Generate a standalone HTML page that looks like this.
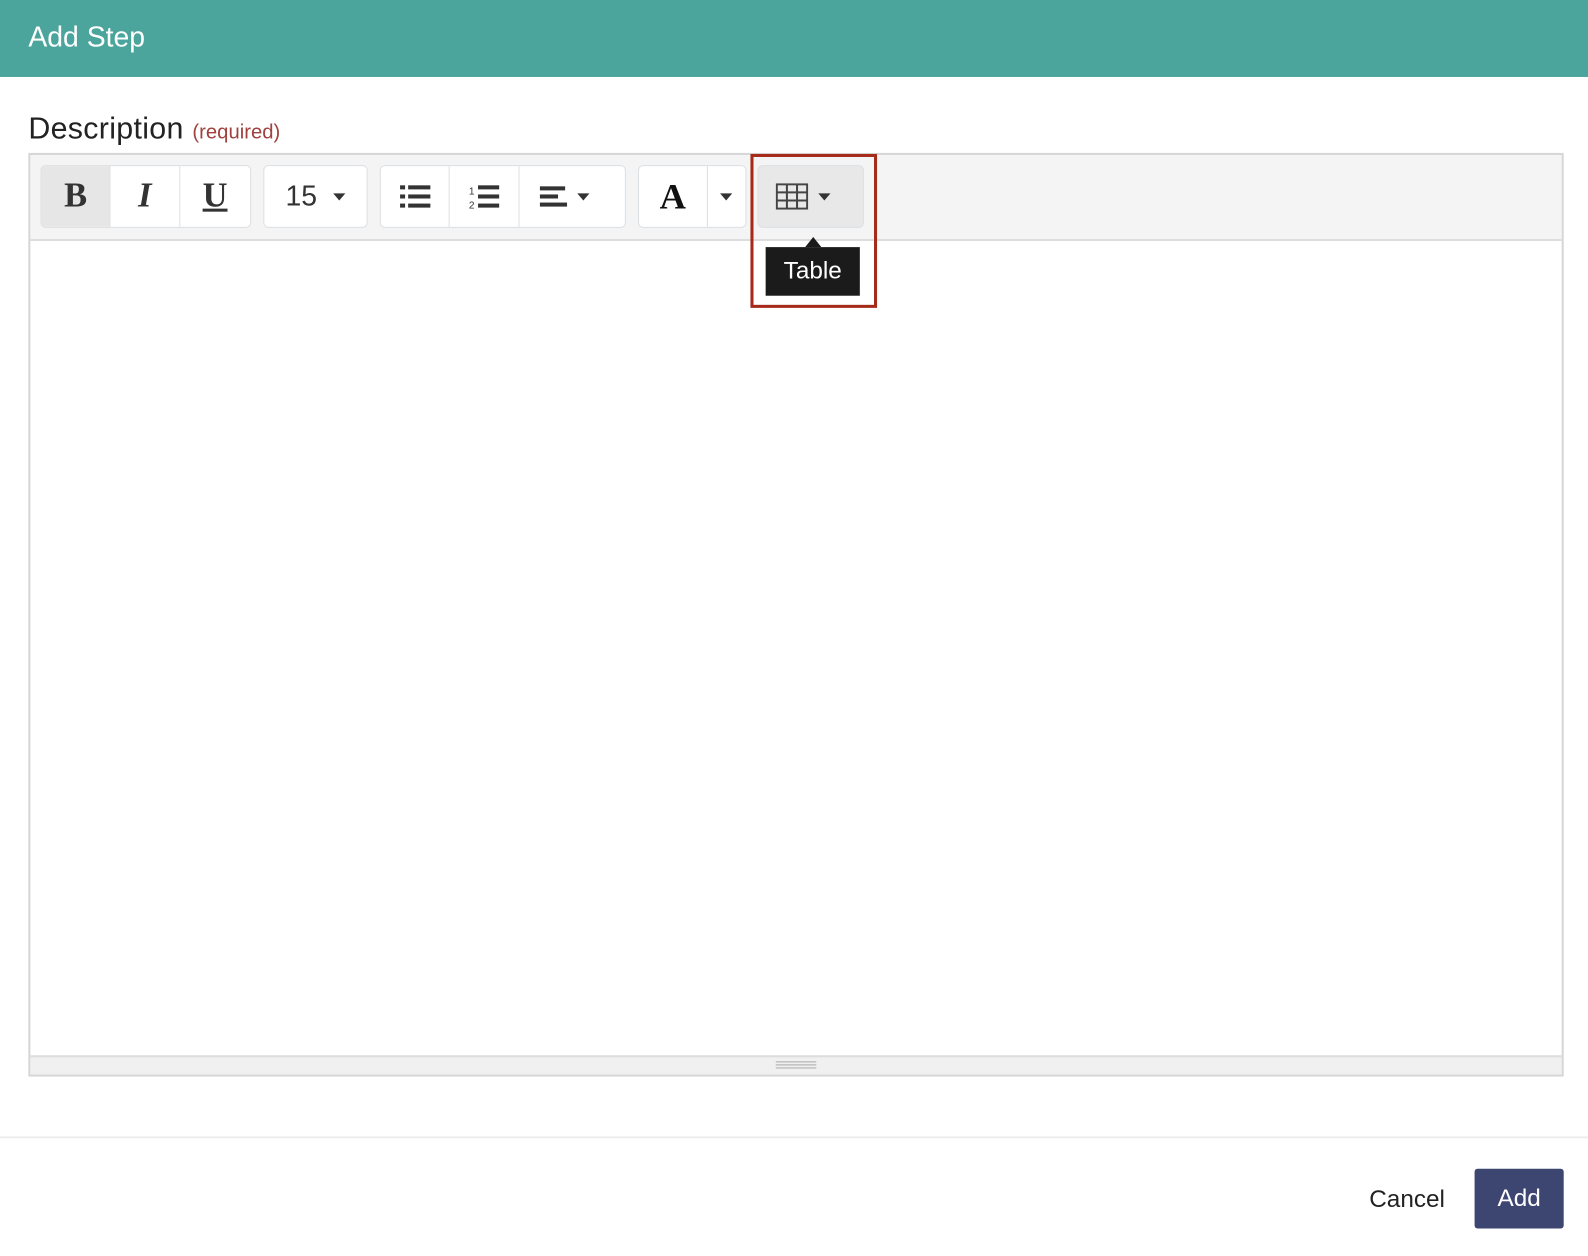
<!DOCTYPE html><html><head><style>
body{margin:0;width:1588px;height:1254px;background:#fff;font-family:"Liberation Sans",sans-serif;position:relative;overflow:hidden}
#w{position:absolute;left:0;top:0;width:1568px;height:1240px;transform:scale(1.01276);transform-origin:0 0}
.a{position:absolute;box-sizing:border-box}
.grp{position:absolute;top:163px;height:62px;border:1px solid #dcdfe2;border-radius:5px;background:#fff;display:flex;overflow:hidden;box-sizing:border-box}
.grp>div{height:100%;display:flex;align-items:center;justify-content:center;border-right:1px solid #dcdfe2;box-sizing:border-box;color:#333}
.grp>div:last-child{border-right:none}
.car{width:0;height:0;border-left:6px solid transparent;border-right:6px solid transparent;border-top:7px solid #333;display:inline-block}
</style></head><body><div id="w">
<div class="a" style="left:0;top:0;width:1568px;height:76px;background:#4ba59c"></div>
<div class="a" style="left:28px;top:21px;color:#fff;font-size:28px">Add Step</div>
<div class="a" style="left:28px;top:111px;font-size:30px;color:#222;letter-spacing:0.3px">Description <span style="font-size:20px;color:#a0413e;letter-spacing:0">(required)</span></div>
<div class="a" style="left:28px;top:151px;width:1516px;height:912px;border:2px solid #d6d6d6;background:#fff"></div>
<div class="a" style="left:30px;top:153px;width:1512px;height:85px;background:#f4f4f4;border-bottom:2px solid #ddd"></div>
<div class="a" style="left:30px;top:1042px;width:1512px;height:19px;background:#f0f0f0;border-top:2px solid #ddd"></div>
<div class="a" style="left:766px;top:1048px;width:40px;height:7px;border-top:1px solid #aaa;border-bottom:1px solid #aaa"></div>
<div class="a" style="left:766px;top:1051px;width:40px;height:1px;background:#aaa"></div>
<div class="grp" style="left:40px;width:208px">
<div style="width:69px;background:#e6e6e6;font:bold 34px 'Liberation Serif',serif">B</div>
<div style="width:69px;font:italic bold 34px 'Liberation Serif',serif">I</div>
<div style="width:70px;font:bold 34px 'Liberation Serif',serif;text-decoration:underline">U</div></div>
<div class="grp" style="left:260px;width:103px"><div style="width:103px;font-size:28px;gap:16px">15 <span class="car"></span></div></div>
<div class="grp" style="left:375px;width:243px">
<div style="width:69px"><svg width="30" height="26"><g fill="#333"><rect x="0" y="2" width="5" height="4"/><rect x="8" y="2" width="22" height="4"/><rect x="0" y="11" width="5" height="4"/><rect x="8" y="11" width="22" height="4"/><rect x="0" y="20" width="5" height="4"/><rect x="8" y="20" width="22" height="4"/></g></svg></div>
<div style="width:69px"><svg width="30" height="26"><g fill="#333"><rect x="9" y="2" width="21" height="4"/><rect x="9" y="11" width="21" height="4"/><rect x="9" y="20" width="21" height="4"/></g><text x="0" y="11" font-size="10" fill="#333" font-family="Liberation Sans">1</text><text x="0" y="25" font-size="10" fill="#333" font-family="Liberation Sans">2</text></svg></div>
<div style="width:105px;gap:10px;padding-right:14px"><svg width="27" height="22"><g fill="#333"><rect y="1" width="25" height="4"/><rect y="9" width="18" height="4"/><rect y="17" width="27" height="4"/></g></svg><span class="car"></span></div></div>
<div class="grp" style="left:630px;width:107px">
<div style="width:69px;font:bold 36px 'Liberation Serif',serif;color:#111">A</div>
<div style="width:38px"><span class="car"></span></div></div>
<div class="grp" style="left:748px;width:105px;background:#e8e8e8"><div style="width:105px;gap:10px;padding-right:16px"><svg width="32" height="26"><g fill="none" stroke="#444" stroke-width="2"><rect x="1" y="1" width="30" height="24"/><path d="M11 1V25M21 1V25M1 9H31M1 17H31"/></g></svg><span class="car"></span></div></div>
<div class="a" style="left:741px;top:152px;width:125px;height:152px;border:3px solid #a52a1a"></div>
<div class="a" style="left:795px;top:234px;width:0;height:0;border-left:8px solid transparent;border-right:8px solid transparent;border-bottom:10px solid #1b1b1b"></div>
<div class="a" style="left:756px;top:244px;width:93px;height:48px;background:#1b1b1b;color:#fff;font-size:24px;display:flex;align-items:center;justify-content:center">Table</div>
<div class="a" style="left:0;top:1122px;width:1568px;height:2px;background:#eee"></div>
<div class="a" style="left:1352px;top:1171px;font-size:24px;color:#222">Cancel</div>
<div class="a" style="left:1456px;top:1154px;width:88px;height:59px;background:#3d4571;border-radius:3px;color:#fff;font-size:24px;display:flex;align-items:center;justify-content:center">Add</div>
</div></body></html>
